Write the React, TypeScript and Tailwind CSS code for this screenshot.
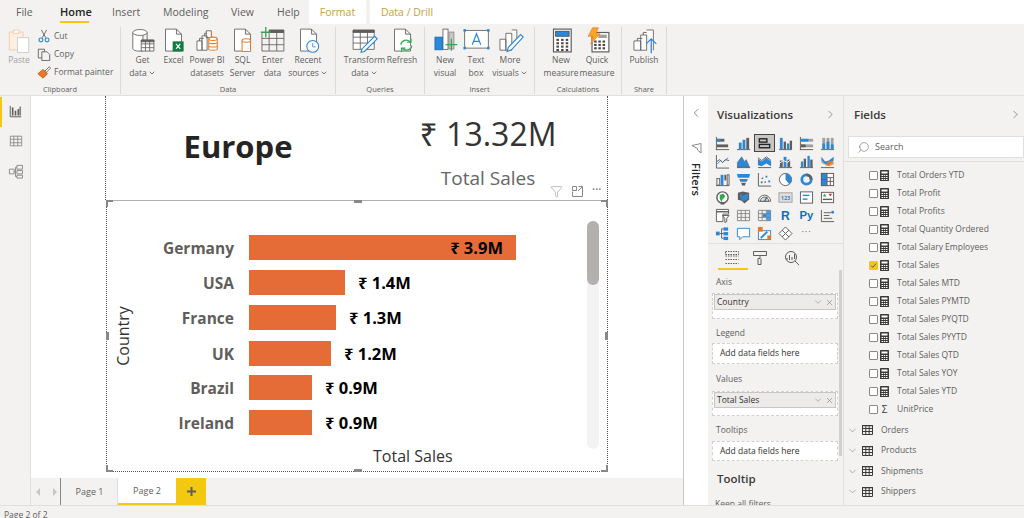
import React from 'react';
import { ChevronDown, ChevronLeft, ChevronRight, Filter, Search, X } from 'lucide-react';

const INK = '#605e5c';
const BLUE = '#2b88d8';
const ORANGE = '#e8792b';

const Ico: React.FC<{ children: React.ReactNode; size?: number; box?: number; className?: string }> = ({ children, size = 32, box = 32, className }) => (
  <svg width={size} height={size} viewBox={`0 0 ${box} ${box}`} fill="none" stroke={INK} strokeWidth="1" className={className}>
    {children}
  </svg>
);

const Doc = () => <path d="M6.5 2.5h13l6 6v20h-19z M19.5 2.5v6h6" fill="#fff" />;

const ribbonIcons: Record<string, React.ReactNode> = {
  get: (
    <>
      <path d="M4.5 6.5v19c0 2 4 3 6 3h6v-22" fill="#fff" />
      <ellipse cx="13" cy="6.5" rx="8.5" ry="3.5" fill="#fff" />
      <path d="M21.5 6.5v9" />
      <path d="M14.5 15.5h15v13h-15z M14.5 20h15 M14.5 24.5h15 M19.5 15.5v13 M24.5 15.5v13" fill="#fff" />
      <path d="M14.5 15.5h15v2h-15z" fill={INK} />
    </>
  ),
  excel: (
    <>
      <Doc />
      <rect x="15" y="17" width="13" height="12" fill="#107c41" stroke="none" />
      <path d="M19 20l5 6M24 20l-5 6" stroke="#fff" strokeWidth="1.4" />
    </>
  ),
  pbi: (
    <>
      <path d="M3.5 16.5h6v11h-6z M9.5 10.5h6v17h-6z M14.5 4.5h6v8h-6z" fill="#fff" />
      <path d="M6.5 16.5v-3h5 M12.5 10.5v-3h3" />
      <g stroke={ORANGE} fill="#fff" strokeWidth="1.2">
        <path d="M17.5 14v12.5c0 1.5 10 1.5 10 0V14" />
        <ellipse cx="22.5" cy="14" rx="5" ry="2" />
        <path d="M17.5 18.5c0 1.6 10 1.6 10 0M17.5 22.5c0 1.6 10 1.6 10 0" />
      </g>
    </>
  ),
  sql: (
    <>
      <Doc />
      <g stroke={ORANGE} fill="#fff" strokeWidth="1.2">
        <path d="M15.5 16v12c0 1.5 10 1.5 10 0V16" />
        <ellipse cx="20.5" cy="16" rx="5" ry="2" />
      </g>
    </>
  ),
  enter: (
    <>
      <path d="M3.5 6.5h26v22h-26z M3.5 13.5h26 M3.5 21h26 M12 6.5v22 M21 6.5v22" />
      <path d="M12 3.5h17.5v3H12z" fill={INK} />
      <path d="M8 0v12M2 6h12" stroke="#33a853" strokeWidth="1.6" />
    </>
  ),
  recent: (
    <>
      <Doc />
      <circle cx="21" cy="23" r="7" fill="#fff" stroke={BLUE} strokeWidth="1.3" />
      <path d="M21 19v4.5h3.5" stroke={BLUE} />
    </>
  ),
  transform: (
    <>
      <path d="M2.5 4.5h25v22h-25z M2.5 12h25 M2.5 19h25 M11 4.5v22 M19.5 4.5v22" fill="#fff" />
      <path d="M2.5 3.5h25v3h-25z" fill={INK} />
      <path d="M28 11l3 3-15 15-4 1 1-4z" fill="#fff" stroke={BLUE} strokeWidth="1.4" />
    </>
  ),
  refresh: (
    <>
      <Doc />
      <path d="M14 21a6.5 6.5 0 0 1 11-3.5M27 22a6.5 6.5 0 0 1-11 3.5" stroke="#33a853" strokeWidth="1.5" fill="#fff" />
      <path d="M26 13.5V18h-4.5M15 29.5V25h4.5" stroke="#33a853" strokeWidth="1.5" />
    </>
  ),
  visual: (
    <>
      <rect x="13" y="2.5" width="6" height="24" fill="#fff" />
      <rect x="20" y="6" width="6" height="20" fill="#c8c6c4" stroke="#8a8886" />
      <rect x="3.5" y="12" width="9" height="15" fill={BLUE} stroke="#106ebe" />
      <path d="M23 14v14M16 21h14" stroke="#33a853" strokeWidth="1.5" />
    </>
  ),
  text: (
    <>
      <rect x="2" y="4" width="28" height="21" fill="#fff" />
      <g fill={BLUE} stroke="none">
        <rect x="0.5" y="2.5" width="3" height="3" />
        <rect x="28.5" y="2.5" width="3" height="3" />
        <rect x="0.5" y="23.5" width="3" height="3" />
        <rect x="28.5" y="23.5" width="3" height="3" />
      </g>
      <path d="M11 21l5-13 5 13M13 17h6" stroke={BLUE} strokeWidth="1.4" />
    </>
  ),
  more: (
    <>
      <path d="M3.5 14.5h7v13h-7z M10.5 7.5h7v20h-7z M17.5 3.5h6v11" fill="#fff" />
      <path d="M28 9l3 3-14 15-5 2 1.5-5z" fill="#fff" stroke={BLUE} strokeWidth="1.4" />
    </>
  ),
  measure: (
    <>
      <rect x="6.5" y="2.5" width="21" height="27" fill="#fff" strokeWidth="1.4" />
      <rect x="9" y="5" width="16" height="6" fill={BLUE} stroke="#4a4a4a" />
      <g fill="#4a4a4a" stroke="none">
        {[14, 18, 22, 26].flatMap((y) => [10, 15.5, 21].map((x) => <rect key={`${x}-${y}`} x={x} y={y} width="3" height="2.5" />))}
      </g>
    </>
  ),
  quick: (
    <>
      <rect x="9.5" y="6.5" width="20" height="23" fill="#fff" strokeWidth="1.4" />
      <rect x="17" y="9" width="10" height="4" fill="#a19f9d" stroke="none" />
      <g fill="#4a4a4a" stroke="none">
        {[16, 20, 24].flatMap((y) => [12, 17, 22].map((x) => <rect key={`${x}-${y}`} x={x} y={y} width="3" height="2.5" />))}
      </g>
      <path d="M10 1h7l-3 7h5L8 20l3-9H5z" fill="#f7a823" stroke="#e8792b" strokeWidth="0.8" />
    </>
  ),
  publish: (
    <>
      <path d="M3.5 16.5h8v11h-8z M11.5 9.5h7v18h-7z M18.5 3.5h8v24" fill="#fff" />
      <path d="M7.5 16.5v-3h6 M14.5 9.5v-3h4" />
      <path d="M24 31V14M18 20l6-6 6 6" stroke={BLUE} strokeWidth="1.5" />
    </>
  ),
};

const Labeled: React.FC<{ icon: string; lines: string[]; caret?: boolean; w: number }> = ({ icon, lines, caret, w }) => (
  <div className="flex flex-col items-center shrink-0" style={{ width: w }}>
    <div className="h-[26px] flex items-end">
      <Ico size={27}>{ribbonIcons[icon]}</Ico>
    </div>
    <div className="text-center leading-[12.5px] text-[8.5px] text-[#605e5c] whitespace-nowrap">
      {lines.map((l, i) => (
        <div key={l}>
          {l}
          {caret && i === lines.length - 1 && <ChevronDown size={8} strokeWidth={2.5} className="inline ml-[1px]" />}
        </div>
      ))}
    </div>
  </div>
);

const Group: React.FC<{ label: string; w: number; pl: number; children: React.ReactNode }> = ({ label, w, pl, children }) => (
  <div className="shrink-0 h-[67px] mt-[3px] border-r border-[#dcdad8] flex flex-col" style={{ width: w }}>
    <div className="flex-1 flex pt-[1px]" style={{ paddingLeft: pl }}>
      {children}
    </div>
    <div className="text-center text-[7.5px] leading-[10px] text-[#605e5c]">{label}</div>
  </div>
);

const TopBar = () => (
  <div className="h-[24px] flex items-stretch text-[10.5px] text-[#605e5c] bg-[#f3f2f1]">
    <div className="w-[48px] pl-[16px] pt-[5px]">File</div>
    <div className="w-[52px] pt-[4px] pl-[12px] relative font-semibold text-[#252423] text-[11px]">
      Home
      <div className="absolute left-[12px] top-[21px] w-[29px] h-[2px] bg-[#f2c811]" />
    </div>
    <div className="w-[51px] pl-[12px] pt-[5px]">Insert</div>
    <div className="w-[68px] pl-[12px] pt-[5px]">Modeling</div>
    <div className="w-[46px] pl-[12px] pt-[5px]">View</div>
    <div className="w-[44px] pl-[12px] pt-[5px]">Help</div>
    <div className="w-[57px] bg-white text-center pt-[5px] font-medium text-[#c8a13a]">Format</div>
    <div className="w-[4px]" />
    <div className="w-[74px] bg-white text-center pt-[5px] font-medium text-[#c8a13a]">Data / Drill</div>
    <div className="flex-1 bg-white" />
  </div>
);

const Ribbon = () => (
  <div className="h-[72px] bg-[#f3f2f1] border-b border-[#e1dfdd] flex">
    <Group label="Clipboard" w={121} pl={0}>
      <div className="w-[38px] flex flex-col items-center">
        <div className="h-[26px] flex items-end">
          <Ico size={26}>
            <rect x="4" y="5" width="17" height="22" fill="#fdf0e2" stroke="#f3c9a0" />
            <rect x="9" y="2.5" width="7" height="4" fill="#fff" stroke="#f3c9a0" />
            <rect x="14" y="12" width="14" height="18" fill="#fff" stroke="#c8c6c4" />
          </Ico>
        </div>
        <div className="text-[8.5px] leading-[12.5px] text-[#a19f9d]">Paste</div>
      </div>
      <div className="flex flex-col text-[8.5px] text-[#605e5c] mt-[-1px] ml-[-1px]">
        <div className="h-[18px] flex items-center gap-[3px]">
          <Ico size={14} box={16}>
            <path d="M5 1l5 9M11 1L6 10" />
            <circle cx="4.5" cy="12.5" r="2.2" stroke={BLUE} strokeWidth="1.3" />
            <circle cx="11.5" cy="12.5" r="2.2" stroke={BLUE} strokeWidth="1.3" />
          </Ico>
          Cut
        </div>
        <div className="h-[18px] flex items-center gap-[3px]">
          <Ico size={14} box={16}>
            <path d="M1.5 2.5h7v10h-7z" />
            <path d="M5.5 5.5h6l3 3v7h-9z" fill="#f3f2f1" />
          </Ico>
          Copy
        </div>
        <div className="h-[18px] flex items-center gap-[3px]">
          <Ico size={14} box={16}>
            <path d="M1 10l6-5 5 5-5 5z" fill={ORANGE} stroke="#c8591a" />
            <path d="M9 7l5-5 1.5 1.5-5 5z" fill="#fff" />
          </Ico>
          Format painter
        </div>
      </div>
    </Group>
    <Group label="Data" w={215} pl={5}>
      <Labeled icon="get" lines={['Get', 'data']} caret w={33} />
      <Labeled icon="excel" lines={['Excel']} w={29} />
      <Labeled icon="pbi" lines={['Power BI', 'datasets']} w={38} />
      <Labeled icon="sql" lines={['SQL', 'Server']} w={33} />
      <Labeled icon="enter" lines={['Enter', 'data']} w={27} />
      <Labeled icon="recent" lines={['Recent', 'sources']} caret w={44} />
    </Group>
    <Group label="Queries" w={89} pl={7}>
      <Labeled icon="transform" lines={['Transform', 'data']} caret w={43} />
      <Labeled icon="refresh" lines={['Refresh']} w={32} />
    </Group>
    <Group label="Insert" w={110} pl={5}>
      <Labeled icon="visual" lines={['New', 'visual']} w={30} />
      <Labeled icon="text" lines={['Text', 'box']} w={32} />
      <Labeled icon="more" lines={['More', 'visuals']} caret w={36} />
    </Group>
    <Group label="Calculations" w={87} pl={8}>
      <Labeled icon="measure" lines={['New', 'measure']} w={36} />
      <Labeled icon="quick" lines={['Quick', 'measure']} w={36} />
    </Group>
    <Group label="Share" w={45} pl={4}>
      <Labeled icon="publish" lines={['Publish']} w={36} />
    </Group>
  </div>
);

const Rail = () => (
  <div className="w-[31px] shrink-0 bg-[#f3f2f1] border-r border-[#e1dfdd] relative flex flex-col items-center pt-[9px] pl-[1px] gap-[16px]">
    <div className="absolute left-0 top-[1px] w-[2px] h-[30px] bg-[#f2c811]" />
    <Ico size={13} box={16}>
      <path d="M1.5 1v13.5H15" strokeWidth="1.2" />
      <g fill={INK} stroke="none">
        <rect x="3.5" y="3" width="2" height="10" />
        <rect x="7" y="7" width="2" height="6" />
        <rect x="10.5" y="5" width="2" height="8" />
        <rect x="13" y="2" width="1.5" height="11" />
      </g>
    </Ico>
    <Ico size={14} box={16}>
      <path d="M1.5 2.5h13v11h-13z M1.5 6h13 M1.5 10h13 M5.5 2.5v11 M10 2.5v11" stroke="#8a8886" />
    </Ico>
    <Ico size={15} box={16}>
      <path d="M1.5 5.5h5v5h-5z M9.5 1.5h6v4h-6z M9.5 7h6v3.5h-6z M9.5 12h6v3h-6z M6.5 8H8M8 3.5v10h1.5M8 3.5h1.5" stroke="#8a8886" />
    </Ico>
  </div>
);

const rows = [
  { name: 'Germany', w: 267, value: '₹ 3.9M', inside: true, mt: 0 },
  { name: 'USA', w: 96, value: '₹ 1.4M', mt: 10 },
  { name: 'France', w: 87, value: '₹ 1.3M', mt: 10 },
  { name: 'UK', w: 82, value: '₹ 1.2M', mt: 11 },
  { name: 'Brazil', w: 63, value: '₹ 0.9M', mt: 9 },
  { name: 'Ireland', w: 63, value: '₹ 0.9M', mt: 10 },
];

const Handle: React.FC<{ className: string }> = ({ className }) => <div className={`absolute bg-[#8a8886] ${className}`} />;

const ChartVisual = () => (
  <div className="absolute left-[75px] top-[104px] w-[502px] h-[272px] border-x border-b border-dotted border-[#555] border-t-0">
    <div className="absolute left-[-1px] right-[-1px] top-0 h-px bg-[#b3b0ad]" />
    <div className="absolute right-[1px] top-[-15px] flex items-center gap-[8px] text-[#8a8886]">
      <Filter size={13} strokeWidth={1} />
      <svg width="13" height="13" viewBox="0 0 13 13" fill="none" stroke="#8a8886">
        <path d="M7.5 1.5h4v10h-10v-5 M1.5 1.5h4v4h-4z M7 6l4-4" />
      </svg>
      <span className="text-[12px] leading-[11px] w-[14px] mt-[-4px] text-[#605e5c]">···</span>
    </div>
    <div className="h-full flex pt-[35px] relative">
      <div className="w-[32px] shrink-0 flex items-center justify-center">
        <span className="rotate-[-90deg] text-[16px] text-[#333] mt-[-34px]">Country</span>
      </div>
      <div className="flex-1 flex flex-col">
        {rows.map((r) => (
          <div key={r.name} className="flex items-center h-[25px] shrink-0" style={{ marginTop: r.mt }}>
            <div className="w-[95px] mt-[2px] text-right font-bold text-[#605e5c] text-[15.5px] whitespace-nowrap">{r.name}</div>
            <div className="ml-[15px] h-[25px] bg-[#e66c37] flex items-center justify-end pr-[13px]" style={{ width: r.w }}>
              {r.inside && <span className="mt-[2px] font-bold text-[16.5px] text-black whitespace-nowrap">{r.value}</span>}
            </div>
            {!r.inside && <span className="ml-[13px] mt-[2px] font-bold text-[16.5px] text-black whitespace-nowrap">{r.value}</span>}
          </div>
        ))}
        <div className="mt-[11px] ml-[234px] text-[16px] leading-[20px] text-[#333] whitespace-nowrap">Total Sales</div>
      </div>
      <div className="w-[12px] shrink-0 absolute right-[8px] top-[21px] bottom-[22px] bg-[#f3f3f3] rounded-full">
        <div className="h-[64px] rounded-full bg-[#b3b0ad]" />
      </div>
    </div>
    <Handle className="left-[-1px] top-0 w-[7px] h-[2px]" />
    <Handle className="left-[-1px] top-0 w-[2px] h-[7px]" />
    <Handle className="right-[-1px] top-0 w-[7px] h-[2px]" />
    <Handle className="right-[-1px] top-0 w-[2px] h-[7px]" />
    <Handle className="left-[-1px] bottom-[-1px] w-[7px] h-[2px]" />
    <Handle className="left-[-1px] bottom-[-1px] w-[2px] h-[7px]" />
    <Handle className="right-[-1px] bottom-[-1px] w-[7px] h-[2px]" />
    <Handle className="right-[-1px] bottom-[-1px] w-[2px] h-[7px]" />
    <Handle className="left-[247px] top-0 w-[8px] h-[3px]" />
    <Handle className="left-[247px] bottom-[-1px] w-[8px] h-[3px]" />
    <Handle className="left-[-1px] top-[132px] w-[3px] h-[8px]" />
    <Handle className="right-[-1px] top-[132px] w-[3px] h-[8px]" />
  </div>
);

const Report = () => (
  <div className="flex-1 bg-white relative overflow-hidden">
    <div className="absolute left-[74px] top-0 w-px h-[104px] border-l border-dotted border-[#555]" />
    <div className="absolute left-[576px] top-0 w-px h-[104px] border-l border-dotted border-[#555]" />
    <div className="absolute left-[75px] top-[28px] w-[264px] text-center font-bold text-[31px] leading-[44px] text-[#252423]">Europe</div>
    <div className="absolute left-[340px] top-[15px] w-[234px] text-center text-[32px] leading-[46px] text-[#333]">₹ 13.32M</div>
    <div className="absolute left-[340px] top-[68px] w-[234px] text-center text-[19px] leading-[28px] text-[#666]">Total Sales</div>
    <ChartVisual />
  </div>
);

const PageTabs = () => (
  <div className="h-[27px] shrink-0 bg-[#f3f2f1] flex items-stretch text-[9px] text-[#605e5c]">
    <div className="w-[30px] flex items-center gap-[9px] pl-[4px] border-r border-[#8a8886] text-[#c8c6c4]">
      <svg width="7" height="8" viewBox="0 0 7 8" fill="#c8c6c4"><path d="M5 0v8L1 4z" /></svg>
      <svg width="7" height="8" viewBox="0 0 7 8" fill="#c8c6c4"><path d="M2 0v8l4-4z" /></svg>
    </div>
    <div className="w-[57px] pl-[1px] flex items-center justify-center border-r border-[#e1dfdd]">Page 1</div>
    <div className="w-[58px] bg-white border-b-2 border-[#f2c811] flex items-center justify-center">Page 2</div>
    <div className="w-[30px] bg-[#f2c811] flex items-center justify-center">
      <svg width="9" height="9" viewBox="0 0 9 9" stroke="#605e5c" strokeWidth="2"><path d="M4.5 0v9M0 4.5h9" /></svg>
    </div>
  </div>
);

const vizIcons: React.ReactNode[] = [
  <><path d="M1.5 1v14" /><rect x="2" y="3" width="8" height="3" fill={INK} stroke="none" /><rect x="2" y="3" width="4" height="3" fill={BLUE} stroke="none" /><rect x="2" y="9" width="12" height="3" fill={INK} stroke="none" /><path d="M1 14.5h14" /></>,
  <><path d="M1 14.5h14" /><rect x="3" y="7" width="3" height="7" fill={BLUE} stroke="none" /><rect x="7" y="4" width="3" height="10" fill={BLUE} stroke="none" /><rect x="11" y="2" width="3" height="12" fill={INK} stroke="none" /></>,
  <><rect x="2.5" y="3" width="8" height="3.5" fill="none" stroke="#252423" strokeWidth="1.5" /><rect x="2.5" y="9" width="11" height="3.5" fill="none" stroke="#252423" strokeWidth="1.5" /></>,
  <><path d="M1 14.5h14" /><rect x="2" y="2" width="3" height="12" fill={BLUE} stroke="none" /><rect x="6" y="6" width="2.5" height="8" fill={INK} stroke="none" /><rect x="9.5" y="8" width="2.5" height="6" fill={BLUE} stroke="none" /><rect x="12.5" y="5" width="2.5" height="9" fill={INK} stroke="none" /></>,
  <><path d="M1 14.5h14M1.5 1v14" /><rect x="2" y="3" width="13" height="3" fill="#a19f9d" stroke="none" /><rect x="2" y="3" width="8" height="3" fill={BLUE} stroke="none" /><rect x="2" y="9" width="13" height="3" fill="#a19f9d" stroke="none" /><rect x="2" y="9" width="5" height="3" fill={INK} stroke="none" /></>,
  <><path d="M1 14.5h14" /><rect x="2.5" y="2" width="3" height="12" fill="#a19f9d" stroke="none" /><rect x="2.5" y="8" width="3" height="6" fill={BLUE} stroke="none" /><rect x="7" y="2" width="3" height="12" fill="#a19f9d" stroke="none" /><rect x="7" y="6" width="3" height="8" fill={BLUE} stroke="none" /><rect x="11.5" y="2" width="3" height="12" fill="#a19f9d" stroke="none" /><rect x="11.5" y="9" width="3" height="5" fill={BLUE} stroke="none" /></>,
  <><path d="M1.5 1v14H15" /><path d="M2 11l4-4 2 2 6-5" stroke={BLUE} /><path d="M2 8l3-2 3 3 3-3 4 1" /></>,
  <><path d="M1 14.5h14" /><path d="M1.5 14V9L6 3l3 5 2-2 3.5 8z" fill={BLUE} stroke={INK} strokeWidth="0.6" /></>,
  <><path d="M1 12V5l4 3 5-4 5 4v5l-5-3-5 3z" fill={BLUE} stroke="none" /><path d="M1 4l4 3 5-4 5 4" stroke={INK} /><path d="M1 14.5h14" /></>,
  <><path d="M1 14.5h14" /><rect x="2" y="7" width="3" height="7" fill={INK} stroke="none" /><rect x="6" y="3" width="3" height="11" fill={BLUE} stroke="none" /><rect x="10" y="6" width="3" height="8" fill={INK} stroke="none" /><path d="M1 10l5-3 4 2 5-4" stroke="#fff" /></>,
  <><path d="M1 14.5h14" /><rect x="2" y="8" width="2.5" height="6" fill={BLUE} stroke="none" /><rect x="5" y="5" width="2.5" height="9" fill={INK} stroke="none" /><rect x="9" y="2" width="2.5" height="12" fill={BLUE} stroke="none" /><rect x="12" y="6" width="2.5" height="8" fill={INK} stroke="none" /></>,
  <><path d="M1 14.5h14" /><path d="M1.5 3l4 5 4-1 5-4v4l-5 5-4-1-4-4z" fill={BLUE} stroke="none" /><path d="M1.5 7l4 5 4-5 5 1v3l-5 2-4-1-4-3z" fill={ORANGE} stroke="none" opacity="0.85" /></>,
  <><path d="M1 14.5h14" /><rect x="2" y="7" width="3" height="7" fill="none" /><rect x="6" y="3" width="3" height="11" fill={BLUE} stroke="none" /><rect x="10" y="3" width="2" height="6" fill={INK} stroke="none" /><rect x="13" y="3" width="2" height="11" fill="none" /></>,
  <><path d="M1 2h14l-1 4H2z" fill={BLUE} stroke="none" /><path d="M3.5 7.5h9l-1 3h-7z" fill={BLUE} stroke="none" /><path d="M5.5 11.5h5l-1 3h-3z" fill={INK} stroke="none" /></>,
  <><path d="M1.5 1v14H15" /><g fill={BLUE} stroke="none"><rect x="4" y="10" width="2" height="2" /><rect x="9" y="4" width="2" height="2" /><rect x="12" y="9" width="2" height="2" /></g><g fill={INK} stroke="none"><rect x="5" y="6" width="1.5" height="1.5" /><rect x="8" y="10" width="1.5" height="1.5" /></g></>,
  <><circle cx="8" cy="8" r="6.5" fill="#fff" /><path d="M8 1.5a6.5 6.5 0 0 1 4 11.5L8 8z" fill={BLUE} stroke="none" /></>,
  <><circle cx="8" cy="8" r="5" stroke={BLUE} strokeWidth="3" /><path d="M8 3a5 5 0 0 1 5 5" stroke={INK} strokeWidth="3" /></>,
  <><rect x="1.5" y="1.5" width="13" height="13" fill="#fff" /><rect x="1.5" y="1.5" width="6" height="13" fill={BLUE} /><path d="M7.5 6h7M7.5 10h7M11 6v8.5M1.5 8h6" /></>,
  <><circle cx="8" cy="8" r="6" fill="#fff" stroke={INK} strokeWidth="1.5" /><path d="M5 5l4-1 2 3-3 3-1 3-2-4z" fill="#33a853" stroke="none" /><rect x="6" y="13" width="4" height="2.5" fill={INK} stroke="none" /></>,
  <><path d="M2 3l5-1.5 7 1.5v7l-5 4.5-3-3-4-1z" fill={INK} stroke="none" /><path d="M4 3l3 3 6-2v5l-5 3-3-3z" fill={BLUE} stroke="none" /></>,
  <><path d="M1.5 12a6.5 6.5 0 0 1 13 0z" fill="#fff" /><path d="M3.5 12a4.5 4.5 0 0 1 9 0z" fill="#c7e0f4" stroke={INK} /><path d="M8 12l3-5" strokeWidth="1.3" /></>,
  <><rect x="1" y="3" width="14" height="10" fill="#e1dfdd" stroke="#a19f9d" /><text x="8" y="10.5" textAnchor="middle" fontSize="6" fontWeight="700" fill={BLUE} stroke="none">123</text></>,
  <><rect x="1.5" y="2" width="13" height="12" fill="#fff" /><rect x="4" y="5" width="7" height="1.5" fill={BLUE} stroke="none" /><rect x="4" y="9" width="5" height="1.5" fill={BLUE} stroke="none" /></>,
  <><rect x="1.5" y="2.5" width="13" height="11" fill="#fff" /><path d="M5 4l2 3H3z" fill="#33a853" stroke="none" /><path d="M9 4h4l-2 3z" fill="#d13438" stroke="none" /><path d="M3 10h10" strokeWidth="1.5" /></>,
  <><path d="M1.5 1.5h13v5h-6v8h-7z" fill="#fff" /><path d="M1.5 4h13" strokeWidth="1.5" /><path d="M8 8h7l-2.5 3v3.5l-2 1V11z" fill="#fff" /></>,
  <><path d="M1.5 2.5h13v11h-13z M1.5 6h13M1.5 10h13M5.5 2.5v11M10 2.5v11" stroke="#8a8886" /></>,
  <><path d="M1.5 2.5h13v11h-13z M1.5 6h13M1.5 10h13M5.5 2.5v11M10 2.5v11" stroke="#8a8886" /><rect x="6" y="6.5" width="4" height="3" fill={BLUE} stroke="none" /><rect x="10.5" y="2.5" width="4" height="11" fill={BLUE} stroke="none" opacity="0.8" /></>,
  <text x="8" y="13" textAnchor="middle" fontSize="13" fontWeight="700" fill="#106ebe" stroke="none" fontFamily="Liberation Sans">R</text>,
  <text x="8" y="12" textAnchor="middle" fontSize="12" fontWeight="700" fill="#106ebe" stroke="none" fontFamily="Liberation Sans">Py</text>,
  <><path d="M1.5 2v12.5H15" /><path d="M4 5h8M4 8h6M4 11h9" /><circle cx="13.5" cy="4.5" r="1.5" fill={BLUE} stroke="none" /></>,
  <><rect x="1" y="6" width="4" height="4" fill={BLUE} stroke="none" /><rect x="9" y="1.5" width="5" height="3.5" fill={BLUE} stroke="none" /><rect x="9" y="6.5" width="5" height="3.5" fill={BLUE} stroke="none" /><rect x="9" y="11.5" width="5" height="3.5" fill={BLUE} stroke="none" /><path d="M5 8h4M7 3v10h2M7 3h2" /></>,
  <><path d="M1.5 2.5h13v9H7l-3 3v-3H1.5z" stroke={BLUE} fill="#fff" /></>,
  <><rect x="1.5" y="5" width="13" height="9.5" fill="#fff" stroke={BLUE} /><rect x="1" y="1" width="5" height="5" fill={ORANGE} stroke="none" /><rect x="11" y="10" width="4" height="4" fill={ORANGE} stroke="none" /><path d="M4 13l7-7" stroke={BLUE} strokeWidth="2" /></>,
  <><path d="M8 1l3.5 3.5L8 8 4.5 4.5z M4.5 4.5L1 8l3.5 3.5L8 8z M11.5 4.5L15 8l-3.5 3.5L8 8z M8 8l3.5 3.5L8 15l-3.5-3.5z" fill="#fff" /></>,
  <text x="8" y="10" textAnchor="middle" fontSize="10" fill={INK} stroke="none" letterSpacing="1">···</text>,
];

const Well: React.FC<{ pill?: string; h: number; mt: number }> = ({ pill, h, mt }) => (
  <div className="mx-[4px] border border-dashed border-[#d2d0ce] bg-white shrink-0" style={{ height: h, marginTop: mt }}>
    {pill ? (
      <div className="mx-[1px] h-[16px] bg-[#edebe9] border border-[#c8c6c4] flex items-center pl-[2px] pr-[1px] text-[8.5px] text-[#323130]">
        <span className="flex-1">{pill}</span>
        <ChevronDown size={10} strokeWidth={1} className="text-[#605e5c]" />
        <X size={9} strokeWidth={1.2} className="ml-[2px] text-[#605e5c]" />
      </div>
    ) : (
      <div className="h-full flex items-center pl-[7px] text-[8.5px] text-[#323130]">Add data fields here</div>
    )}
  </div>
);

const Section: React.FC<{ title: string; children: React.ReactNode; mt: number }> = ({ title, children, mt }) => (
  <div style={{ marginTop: mt }}>
    <div className="pl-[8px] text-[8.5px] leading-[12px] text-[#605e5c]">{title}</div>
    {children}
  </div>
);

const VizPane = () => (
  <div className="w-[136px] shrink-0 bg-[#f3f2f1] border-r border-[#e1dfdd] flex flex-col overflow-hidden relative">
    <div className="h-[37px] shrink-0 flex items-center justify-between pl-[9px] pr-[6px]">
      <span className="font-semibold text-[11.5px] text-[#3b3a39]">Visualizations</span>
      <ChevronRight size={13} strokeWidth={1.2} className="text-[#605e5c]" />
    </div>
    <div className="grid grid-cols-[repeat(6,21px)] auto-rows-[18px] pl-[4px] pt-[1px] shrink-0">
      {vizIcons.map((icon, i) => (
        <div key={i} className={`w-[21px] h-[18px] flex items-center justify-center ${i === 2 ? 'bg-[#c8c6c4] border border-[#484644]' : ''}`}>
          <Ico size={15} box={16}>{icon}</Ico>
        </div>
      ))}
    </div>
    <div className="mt-[1px] h-[29px] border-t border-[#e1dfdd] shrink-0 flex relative pl-[16px] gap-[12px] pt-[6px]">
      <Ico size={16} box={16}>
        <path d="M1.5 1.5h13v3h-13z M1.5 6h13M1.5 9.5h13M1.5 13.5h13" strokeDasharray="1.5 1" />
      </Ico>
      <Ico size={16} box={16}>
        <path d="M1.5 1.5h13v4h-13z M8 5.5v3h-2v6h3v-6" />
      </Ico>
      <Ico size={16} box={16} className="ml-[4px]">
        <circle cx="7" cy="7" r="5.5" />
        <path d="M3 8v2M5.5 5v5M8 7v3M10.5 4v5M11 11l4 4" />
      </Ico>
      <div className="absolute left-[10px] top-[24px] w-[30px] h-[2px] bg-[#f2c811]" />
    </div>
    <div className="absolute right-[1px] top-[174px] w-[3px] h-[186px] bg-[#d2d0ce]" />
    <div className="flex flex-col pr-[1px]">
      <Section title="Axis" mt={4}><Well pill="Country" h={26} mt={5} /></Section>
      <Section title="Legend" mt={8}><Well h={21} mt={4} /></Section>
      <Section title="Values" mt={9}><Well pill="Total Sales" h={25} mt={6} /></Section>
      <Section title="Tooltips" mt={8}><Well h={20} mt={5} /></Section>
      <div className="mt-[10px] pl-[9px] font-semibold text-[11.5px] leading-[16px] text-[#3b3a39]">Tooltip</div>
      <div className="mt-[11px] pl-[7px] text-[8.5px] leading-[12px] text-[#605e5c] whitespace-nowrap">Keep all filters</div>
    </div>
  </div>
);

const fieldNames = ['Total Orders YTD', 'Total Profit', 'Total Profits', 'Total Quantity Ordered', 'Total Salary Employees', 'Total Sales', 'Total Sales MTD', 'Total Sales PYMTD', 'Total Sales PYQTD', 'Total Sales PYYTD', 'Total Sales QTD', 'Total Sales YOY', 'Total Sales YTD'];

const Calc = () => (
  <svg width="9" height="11" viewBox="0 0 9 11">
    <rect width="9" height="11" rx="0.5" fill="#3b3a39" />
    <rect x="1.5" y="1.5" width="6" height="2" fill="#fff" />
    <g fill="#fff">
      {[5, 7, 9].flatMap((y) => [1.5, 3.75, 6].map((x) => <rect key={`${x}-${y}`} x={x} y={y} width="1.5" height="1" />))}
    </g>
  </svg>
);

const TableIcon = () => (
  <svg width="11" height="10" viewBox="0 0 11 10" fill="none" stroke="#3b3a39">
    <path d="M.5 .5h10v9H.5z M.5 3.5h10M.5 6.5h10M3.8 .5v9M7.2 .5v9" />
    <path d="M0 .5h11" strokeWidth="1.5" />
  </svg>
);

const FieldRow: React.FC<{ name: string; checked?: boolean; sigma?: boolean }> = ({ name, checked, sigma }) => (
  <div className="h-[18px] flex items-center pl-[25px] text-[8.5px] text-[#605e5c] whitespace-nowrap shrink-0">
    <div className={`w-[9px] h-[9px] border rounded-[1px] flex items-center justify-center ${checked ? 'bg-[#f2c811] border-[#f2c811]' : 'bg-white border-[#8a8886]'}`}>
      {checked && (
        <svg width="7" height="7" viewBox="0 0 7 7" fill="none" stroke="#605e5c"><path d="M1 3.5l1.8 1.8L6 1.5" /></svg>
      )}
    </div>
    <div className="w-[9px] ml-[2px] flex items-center justify-center text-[10px] leading-none text-[#3b3a39]">{sigma ? 'Σ' : <Calc />}</div>
    <span className="ml-[8px]">{name}</span>
  </div>
);

const FieldsPane = () => (
  <div className="w-[180px] shrink-0 bg-[#f3f2f1] flex flex-col overflow-hidden">
    <div className="h-[40px] shrink-0 flex items-center justify-between pl-[10px] pr-[2px] pb-[3px]">
      <span className="font-semibold text-[11.5px] text-[#3b3a39]">Fields</span>
      <ChevronRight size={13} strokeWidth={1.2} className="text-[#605e5c]" />
    </div>
    <div className="ml-[4px] h-[22px] shrink-0 bg-white border border-[#e1dfdd] flex items-center pl-[8px] gap-[5px] text-[9px] text-[#605e5c]">
      <Search size={13} strokeWidth={1} className="-scale-x-100" />
      Search
    </div>
    <div className="mt-[3px] h-px bg-[#e1dfdd] shrink-0" />
    <div className="pt-[4px] flex flex-col">
      {fieldNames.map((f) => (
        <FieldRow key={f} name={f} checked={f === 'Total Sales'} />
      ))}
      <FieldRow name="UnitPrice" sigma />
    </div>
    <div className="pt-[2px] flex flex-col">
      {['Orders', 'Products', 'Shipments', 'Shippers'].map((t) => (
        <div key={t} className="h-[20.5px] flex items-center pl-[3px] text-[8.5px] text-[#605e5c] shrink-0">
          <ChevronDown size={11} strokeWidth={1} />
          <div className="ml-[4px]"><TableIcon /></div>
          <span className="ml-[8px]">{t}</span>
        </div>
      ))}
    </div>
  </div>
);

const FilterRail = () => (
  <div className="w-[25px] shrink-0 bg-white border-l border-[#c8c6c4] flex flex-col items-center pt-[10px]">
    <ChevronLeft size={14} strokeWidth={1.2} className="text-[#605e5c]" />
    <svg width="11" height="11" viewBox="0 0 11 11" fill="none" stroke="#8a8886" className="mt-[23px]">
      <path d="M10 .5v9.5L6.5 7V5.5L1 2.5z" />
    </svg>
    <span className="mt-[9px] [writing-mode:vertical-rl] text-[11px] font-semibold text-[#252423] leading-none">Filters</span>
  </div>
);

export default function App() {
  return (
    <div className="w-[1024px] h-[518px] overflow-hidden flex flex-col bg-[#f3f2f1] font-['Open_Sans','Noto_Sans',sans-serif]">
      <TopBar />
      <Ribbon />
      <div className="flex-1 flex min-h-0">
        <Rail />
        <div className="w-[652px] shrink-0 flex flex-col">
          <Report />
          <PageTabs />
        </div>
        <FilterRail />
        <VizPane />
        <FieldsPane />
      </div>
      <div className="h-[13px] shrink-0 border-t border-[#e1dfdd] pl-[4px] text-[8.5px] leading-[18px] text-[#605e5c] overflow-hidden">Page 2 of 2</div>
    </div>
  );
}
